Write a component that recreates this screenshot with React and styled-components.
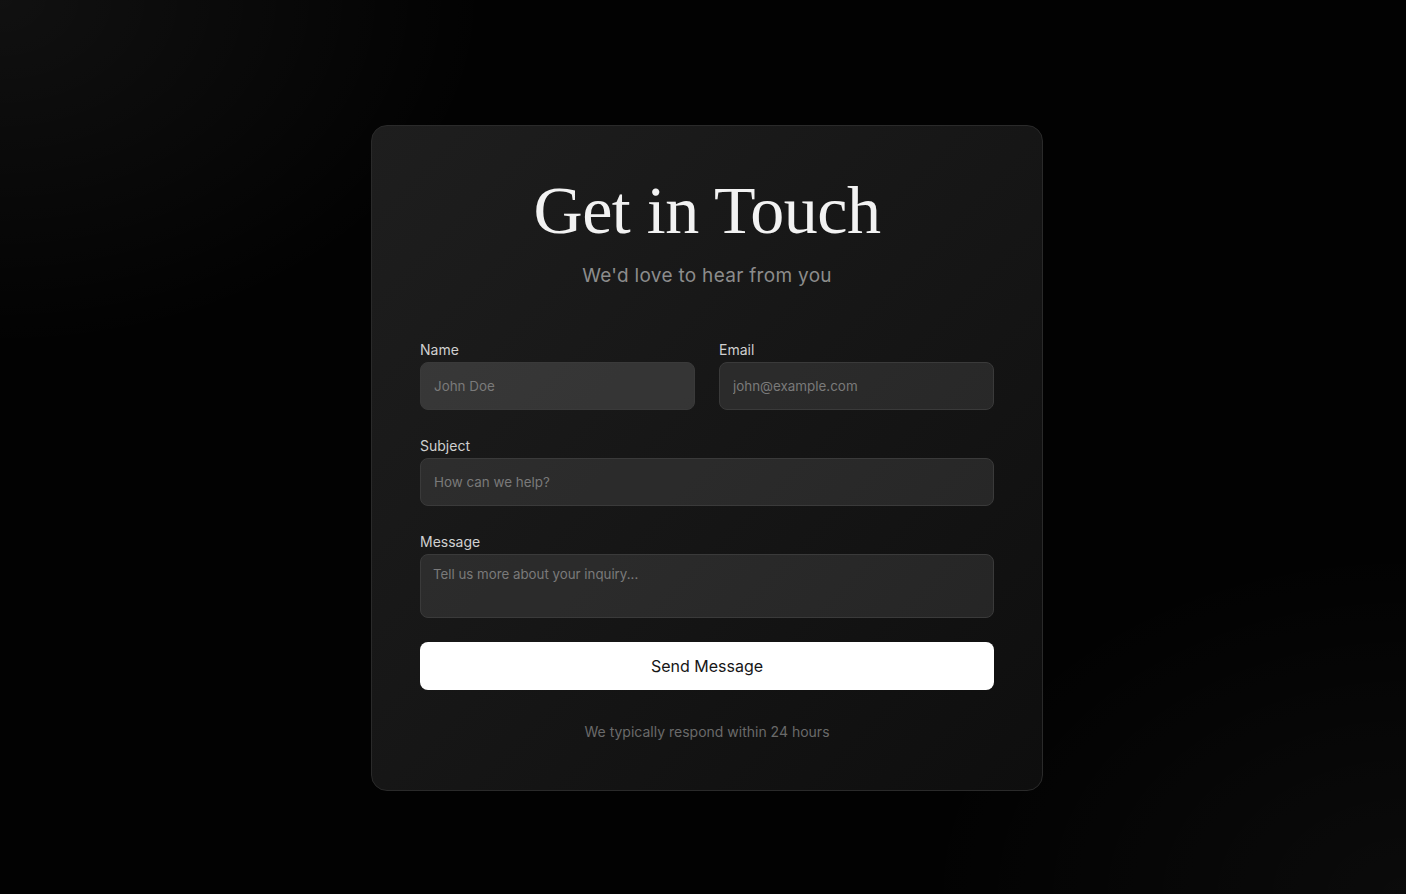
import React from "react";
import styled, { createGlobalStyle } from "styled-components";

const Global = createGlobalStyle`
  html, body { margin: 0; padding: 0; }
  body {
    background: #000;
    font-family: Inter, "Noto Sans", sans-serif;
    -webkit-font-smoothing: antialiased;
  }
  * { box-sizing: border-box; }
`;

const Page = styled.div`
  width: 100%;
  min-height: 894px;
  display: flex;
  justify-content: center;
  align-items: flex-start;
  padding: 125px 0 0 8px;
  background:
    radial-gradient(ellipse 700px 500px at 0% 0%, rgba(255,255,255,0.06), transparent 70%),
    radial-gradient(ellipse 700px 500px at 100% 100%, rgba(255,255,255,0.035), transparent 70%),
    #020202;
`;

const Card = styled.div`
  width: 672px;
  height: 666px;
  border: 1px solid #2a2a2a;
  border-radius: 16px;
  background: linear-gradient(135deg, #1e1e1e 0%, #161616 50%, #0e0e0e 100%);
  padding: 44px 48px 0;
  display: flex;
  flex-direction: column;
`;

const Title = styled.h1`
  margin: 0;
  text-align: center;
  font-family: "Liberation Serif", "DejaVu Serif", serif;
  font-weight: 400;
  font-size: 68px;
  line-height: 80px;
  color: #f2f2f2;
  letter-spacing: -0.5px;
`;

const Subtitle = styled.p`
  margin: 12px 0 0;
  text-align: center;
  font-size: 19px;
  line-height: 28px;
  color: #8c8c8c;
  letter-spacing: 0.3px;
`;

const Form = styled.form`
  margin-top: 48px;
  display: flex;
  flex-direction: column;
  gap: 24px;
`;

const Row = styled.div`
  display: grid;
  grid-template-columns: 1fr 1fr;
  gap: 24px;
`;

const Field = styled.label`
  display: flex;
  flex-direction: column;
`;

const Label = styled.span`
  font-size: 14px;
  line-height: 24px;
  color: #d0d0d0;
`;

const Input = styled.input`
  height: 48px;
  width: 100%;
  border: 1px solid #3a3a3a;
  border-radius: 8px;
  background: ${(p) => (p.$light ? "rgba(255,255,255,0.13)" : "rgba(255,255,255,0.09)")};
  padding: 0 13px;
  font-family: Inter, "Noto Sans", sans-serif;
  font-size: 13.4px;
  color: #ddd;
  outline: none;
  &::placeholder { color: #7a7a7a; }
`;

const TextArea = styled.textarea`
  height: 64px;
  width: 100%;
  resize: none;
  border: 1px solid #3a3a3a;
  border-radius: 8px;
  background: rgba(255,255,255,0.09);
  padding: 10px 12px;
  font-family: Inter, "Noto Sans", sans-serif;
  font-size: 13.3px;
  line-height: 18px;
  color: #ddd;
  outline: none;
  &::placeholder { color: #7a7a7a; }
`;

const Button = styled.button`
  height: 48px;
  width: 100%;
  border: none;
  border-radius: 8px;
  background: #fff;
  color: #161616;
  font-family: Inter, "Noto Sans", sans-serif;
  font-size: 16px;
  letter-spacing: 0;
  cursor: pointer;
`;

const Note = styled.p`
  margin: 32px 0 0;
  text-align: center;
  font-size: 14px;
  line-height: 20px;
  color: #6a6a6a;
`;

export default function App() {
  return (
    <>
      <Global />
      <Page>
        <Card>
          <Title>Get in Touch</Title>
          <Subtitle>We'd love to hear from you</Subtitle>
          <Form onSubmit={(e) => e.preventDefault()}>
            <Row>
              <Field>
                <Label>Name</Label>
                <Input $light placeholder="John Doe" />
              </Field>
              <Field>
                <Label>Email</Label>
                <Input placeholder="john@example.com" />
              </Field>
            </Row>
            <Field>
              <Label>Subject</Label>
              <Input placeholder="How can we help?" />
            </Field>
            <Field>
              <Label>Message</Label>
              <TextArea placeholder="Tell us more about your inquiry..." />
            </Field>
            <Button type="submit">Send Message</Button>
          </Form>
          <Note>We typically respond within 24 hours</Note>
        </Card>
      </Page>
    </>
  );
}
